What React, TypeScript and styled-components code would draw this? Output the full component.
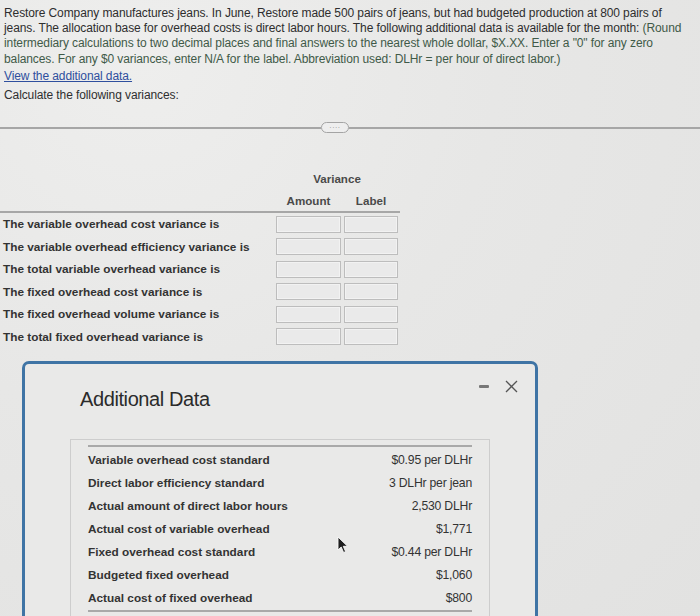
import styled, { createGlobalStyle } from "styled-components";

const GlobalStyle = createGlobalStyle`
  html, body {
    margin: 0;
    padding: 0;
    overflow: hidden;
    background: #e6e6e5;
  }
  body {
    font-family: "Liberation Sans", Arial, sans-serif;
  }
`;

const rows = [
  "The variable overhead cost variance is",
  "The variable overhead efficiency variance is",
  "The total variable overhead variance is",
  "The fixed overhead cost variance is",
  "The fixed overhead volume variance is",
  "The total fixed overhead variance is",
];

const data = [
  ["Variable overhead cost standard", "$0.95 per DLHr"],
  ["Direct labor efficiency standard", "3 DLHr per jean"],
  ["Actual amount of direct labor hours", "2,530 DLHr"],
  ["Actual cost of variable overhead", "$1,771"],
  ["Fixed overhead cost standard", "$0.44 per DLHr"],
  ["Budgeted fixed overhead", "$1,060"],
  ["Actual cost of fixed overhead", "$800"],
];

const App = () => {
  return (
    <Page>
      <GlobalStyle />
      <Question>
        <Intro>
          <p>
            Restore Company manufactures jeans. In June, Restore made 500 pairs of jeans, but had budgeted production at 800 pairs of
            <br />
            jeans. The allocation base for overhead costs is direct labor hours. The following additional data is available for the month:{" "}
            <Hint>
              (Round
              <br />
              intermediary calculations to two decimal places and final answers to the nearest whole dollar, $X.XX. Enter a "0" for any zero
              <br />
              balances. For any $0 variances, enter N/A for the label. Abbreviation used: DLHr = per hour of direct labor.)
            </Hint>
          </p>
        </Intro>
        <Link>View the additional data.</Link>
        <Prompt>Calculate the following variances:</Prompt>
      </Question>

      <Divider>
        <DividerLine $w="321px" />
        <Pill>····</Pill>
        <DividerLine />
      </Divider>

      <VarianceTable>
        <GroupHead>Variance</GroupHead>
        <HeadRow>
          <span />
          <ColHead>Amount</ColHead>
          <ColHead>Label</ColHead>
        </HeadRow>
        {rows.map((r) => (
          <Row key={r}>
            <RowLabel>{r}</RowLabel>
            <Box />
            <Box />
          </Row>
        ))}
      </VarianceTable>

      <Modal>
        <ModalHead>
          <ModalTitle>Additional Data</ModalTitle>
          <Controls>
            <Minimize />
            <svg width="13" height="13" viewBox="0 0 13 13">
              <path d="M1 1 L12 12 M12 1 L1 12" stroke="#555" strokeWidth="1.3" fill="none" />
            </svg>
          </Controls>
        </ModalHead>
        <DataBox>
          <DataTable>
            {data.map(([k, v]) => (
              <DataRow key={k}>
                <DataKey>{k}</DataKey>
                <DataVal>{v}</DataVal>
              </DataRow>
            ))}
          </DataTable>
          <Cursor viewBox="0 0 12 18" width="12" height="18">
            <path d="M1 1 L1 14 L4.2 11 L6.6 16.5 L8.6 15.6 L6.3 10.3 L10.6 10.3 Z" fill="#1e1e1e" stroke="#fafafa" strokeWidth="0.9" />
          </Cursor>
        </DataBox>
      </Modal>
    </Page>
  );
};

export default App;

const Page = styled.div`
  width: 700px;
  height: 616px;
  background: radial-gradient(ellipse at 20% 10%, #eeeeed 0%, #e7e7e6 45%, #e2e2e1 100%);
  color: #2f2f2f;
  overflow: hidden;
`;

const Question = styled.div`
  padding: 6px 0 0 4px;
`;

const Intro = styled.div`
  font-size: 12px;
  line-height: 15.2px;
  letter-spacing: -0.1px;
  color: #2e2e2e;
  p {
    margin: 0;
    white-space: nowrap;
  }
`;

const Hint = styled.span`
  color: #3f5a48;
`;

const Link = styled.div`
  margin-top: 2px;
  font-size: 12px;
  line-height: 15px;
  letter-spacing: -0.1px;
  color: #2f4f9e;
  text-decoration: underline;
`;

const Prompt = styled.div`
  margin-top: 4px;
  font-size: 12px;
  line-height: 15px;
  letter-spacing: -0.1px;
`;

const Divider = styled.div`
  display: flex;
  align-items: center;
  margin-top: 19px;
  height: 12px;
`;

const DividerLine = styled.div<{ $w?: string }>`
  height: 1.5px;
  background: #a6a6a6;
  width: ${(p) => p.$w || "auto"};
  flex: ${(p) => (p.$w ? "none" : "1")};
`;

const Pill = styled.div`
  width: 26px;
  height: 9px;
  border: 1px solid #a4a4a4;
  border-radius: 6px;
  font-size: 7px;
  line-height: 9px;
  text-align: center;
  color: #8a8a8a;
  letter-spacing: 0.5px;
  background: #eeeeee;
`;

const VarianceTable = styled.div`
  margin-top: 37px;
  width: 400px;
`;

const GroupHead = styled.div`
  margin-left: 276px;
  width: 122px;
  text-align: center;
  font-size: 11.6px;
  font-weight: bold;
  color: #4a4a4a;
  line-height: 15px;
`;

const HeadRow = styled.div`
  display: grid;
  grid-template-columns: 273px 65px 54px;
  column-gap: 3px;
  margin-top: 7px;
  padding-bottom: 3px;
  border-bottom: 2px solid #a7a7a7;
`;

const ColHead = styled.div`
  text-align: center;
  font-size: 11.6px;
  font-weight: bold;
  color: #4a4a4a;
  line-height: 15px;
`;

const Row = styled.div`
  display: grid;
  grid-template-columns: 273px 65px 54px;
  column-gap: 3px;
  align-items: center;
  height: 22.5px;
  &:first-of-type {
    margin-top: 1px;
  }
`;

const RowLabel = styled.div`
  padding-left: 3px;
  font-size: 11.8px;
  font-weight: bold;
  color: #333;
  white-space: nowrap;
`;

const Box = styled.div`
  height: 15px;
  border: 1px solid #bdbdbd;
  box-shadow: inset 0 0 0 1px #f2f2f2;
  background: #eaeaea;
`;

const Modal = styled.div`
  margin: 13px 0 0 22px;
  width: 510px;
  height: 300px;
  border: 3px solid #3f74a5;
  border-radius: 7px;
  background: #e9e9e8;
`;

const ModalHead = styled.div`
  display: flex;
  justify-content: space-between;
  align-items: flex-start;
  padding: 16px 17px 0 55px;
  height: 75px;
  box-sizing: border-box;
`;

const ModalTitle = styled.div`
  margin-top: 8px;
  font-size: 20px;
  letter-spacing: -0.4px;
  color: #2b2b2b;
`;

const Controls = styled.div`
  display: flex;
  align-items: center;
  gap: 16px;
`;

const Minimize = styled.div`
  width: 10px;
  height: 3px;
  background: #777;
  border-radius: 1px;
`;

const DataBox = styled.div`
  position: relative;
  margin-left: 45px;
  width: 420px;
  border: 1px solid #cdcdcd;
  padding: 5px 17px 4px 17px;
  box-sizing: border-box;
`;

const DataTable = styled.div`
  border-top: 2px solid #a9a9a9;
  border-bottom: 2px solid #a9a9a9;
  padding-top: 2px;
`;

const DataRow = styled.div`
  display: flex;
  justify-content: space-between;
  align-items: center;
  height: 23px;
`;

const DataKey = styled.div`
  font-size: 11.8px;
  font-weight: bold;
  color: #333;
`;

const DataVal = styled.div`
  font-size: 12.2px;
  color: #333;
  letter-spacing: -0.2px;
`;

const Cursor = styled.svg`
  position: absolute;
  left: 266px;
  top: 96px;
`;
